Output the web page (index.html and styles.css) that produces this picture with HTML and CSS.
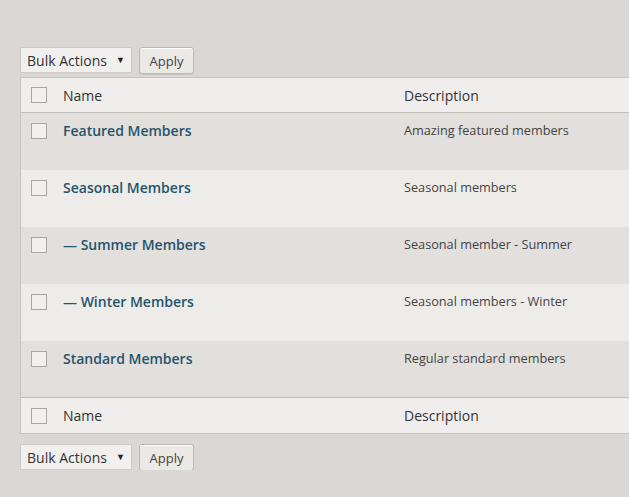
FILE: index.html
```html
<!DOCTYPE html>
<html lang="en">
<head>
    <meta charset="UTF-8">
    <title>Member Groups</title>
    <link rel="stylesheet" href="styles.css">
</head>
<body>
    <div class="page">
        <!-- Top bulk actions -->
        <div class="tablenav">
            <div class="select-box">Bulk Actions <span class="arrow">&#9660;</span></div>
            <button class="button">Apply</button>
        </div>

        <table class="list-table">
            <thead>
                <tr>
                    <th class="check-col"><span class="checkbox"></span></th>
                    <th class="name-col">Name</th>
                    <th class="desc-col">Description</th>
                </tr>
            </thead>
            <tbody>
                <tr class="alt">
                    <td class="check-col"><span class="checkbox"></span></td>
                    <td class="name-col"><a href="#">Featured Members</a></td>
                    <td class="desc-col">Amazing featured members</td>
                </tr>
                <tr>
                    <td class="check-col"><span class="checkbox"></span></td>
                    <td class="name-col"><a href="#">Seasonal Members</a></td>
                    <td class="desc-col">Seasonal members</td>
                </tr>
                <tr class="alt">
                    <td class="check-col"><span class="checkbox"></span></td>
                    <td class="name-col"><a href="#">— Summer Members</a></td>
                    <td class="desc-col">Seasonal member - Summer</td>
                </tr>
                <tr>
                    <td class="check-col"><span class="checkbox"></span></td>
                    <td class="name-col"><a href="#">— Winter Members</a></td>
                    <td class="desc-col">Seasonal members - Winter</td>
                </tr>
                <tr class="alt">
                    <td class="check-col"><span class="checkbox"></span></td>
                    <td class="name-col"><a href="#">Standard Members</a></td>
                    <td class="desc-col">Regular standard members</td>
                </tr>
            </tbody>
            <tfoot>
                <tr>
                    <th class="check-col"><span class="checkbox"></span></th>
                    <th class="name-col">Name</th>
                    <th class="desc-col">Description</th>
                </tr>
            </tfoot>
        </table>

        <!-- Bottom bulk actions -->
        <div class="tablenav">
            <div class="select-box">Bulk Actions <span class="arrow">&#9660;</span></div>
            <button class="button">Apply</button>
        </div>
    </div>
</body>
</html>
```

FILE: styles.css
```css
/* Global */
html, body {
    margin: 0;
    padding: 0;
    overflow: hidden;
}

body {
    font-family: 'Open Sans', 'Noto Sans', sans-serif;
    background: #dad7d4;
    color: #333;
}

.page {
    padding: 47px 0 0 20px;
    width: 640px;
}

/* Bulk action bar */
.tablenav {
    display: flex;
    gap: 7px;
    height: 26px;
}

.select-box {
    box-sizing: border-box;
    width: 112px;
    height: 26px;
    padding: 0 6px;
    display: flex;
    align-items: center;
    justify-content: space-between;
    font-size: 14px;
    color: #333;
    background: #f1f0ee;
    border: 1px solid #cdc9c5;
}

.select-box .arrow {
    font-size: 9px;
    color: #222;
    margin-top: -2px;
}

.button {
    box-sizing: border-box;
    width: 55px;
    height: 27px;
    padding: 0;
    font-family: 'Open Sans', 'Noto Sans', sans-serif;
    font-size: 13px;
    color: #444;
    background: #ebe9e6;
    border: 1px solid #bcb8b4;
    border-radius: 3px;
    box-shadow: 0 1px 0 #fff inset, 0 1px 0 rgba(0, 0, 0, 0.08);
}

/* Table */
.list-table {
    width: 620px;
    border-collapse: collapse;
    margin: 4px 0 10px;
    border: 1px solid #c7c3bf;
    border-right: none;
}

.list-table th {
    font-weight: normal;
    text-align: left;
    font-size: 14px;
    color: #333;
    background: #efeeec;
    height: 34px;
    padding: 0 8px;
}

.list-table thead th {
    border-bottom: 1px solid #c2beba;
}

.list-table tfoot th {
    border-top: 1px solid #c2beba;
    height: 35px;
}

.list-table td {
    height: 57px;
    vertical-align: top;
    padding: 6px 8px 0;
    box-sizing: border-box;
    background: #eeece9;
}

.list-table tr.alt td {
    background: #e2dfdc;
}

.check-col {
    width: 19px;
}

.list-table .check-col {
    padding-left: 7px;
}

.list-table td.check-col {
    padding-top: 10px;
}

.name-col {
    width: 325px;
}

.name-col a {
    font-size: 14px;
    font-weight: 600;
    color: #24546c;
    text-decoration: none;
}

.list-table td.desc-col {
    font-size: 12.7px;
    color: #444;
    padding-top: 8px;
}

.checkbox {
    display: block;
    width: 14px;
    height: 14px;
    margin-left: 3px;
    border: 1px solid #a9a5a2;
    background: #f1f0ee;
}
```
